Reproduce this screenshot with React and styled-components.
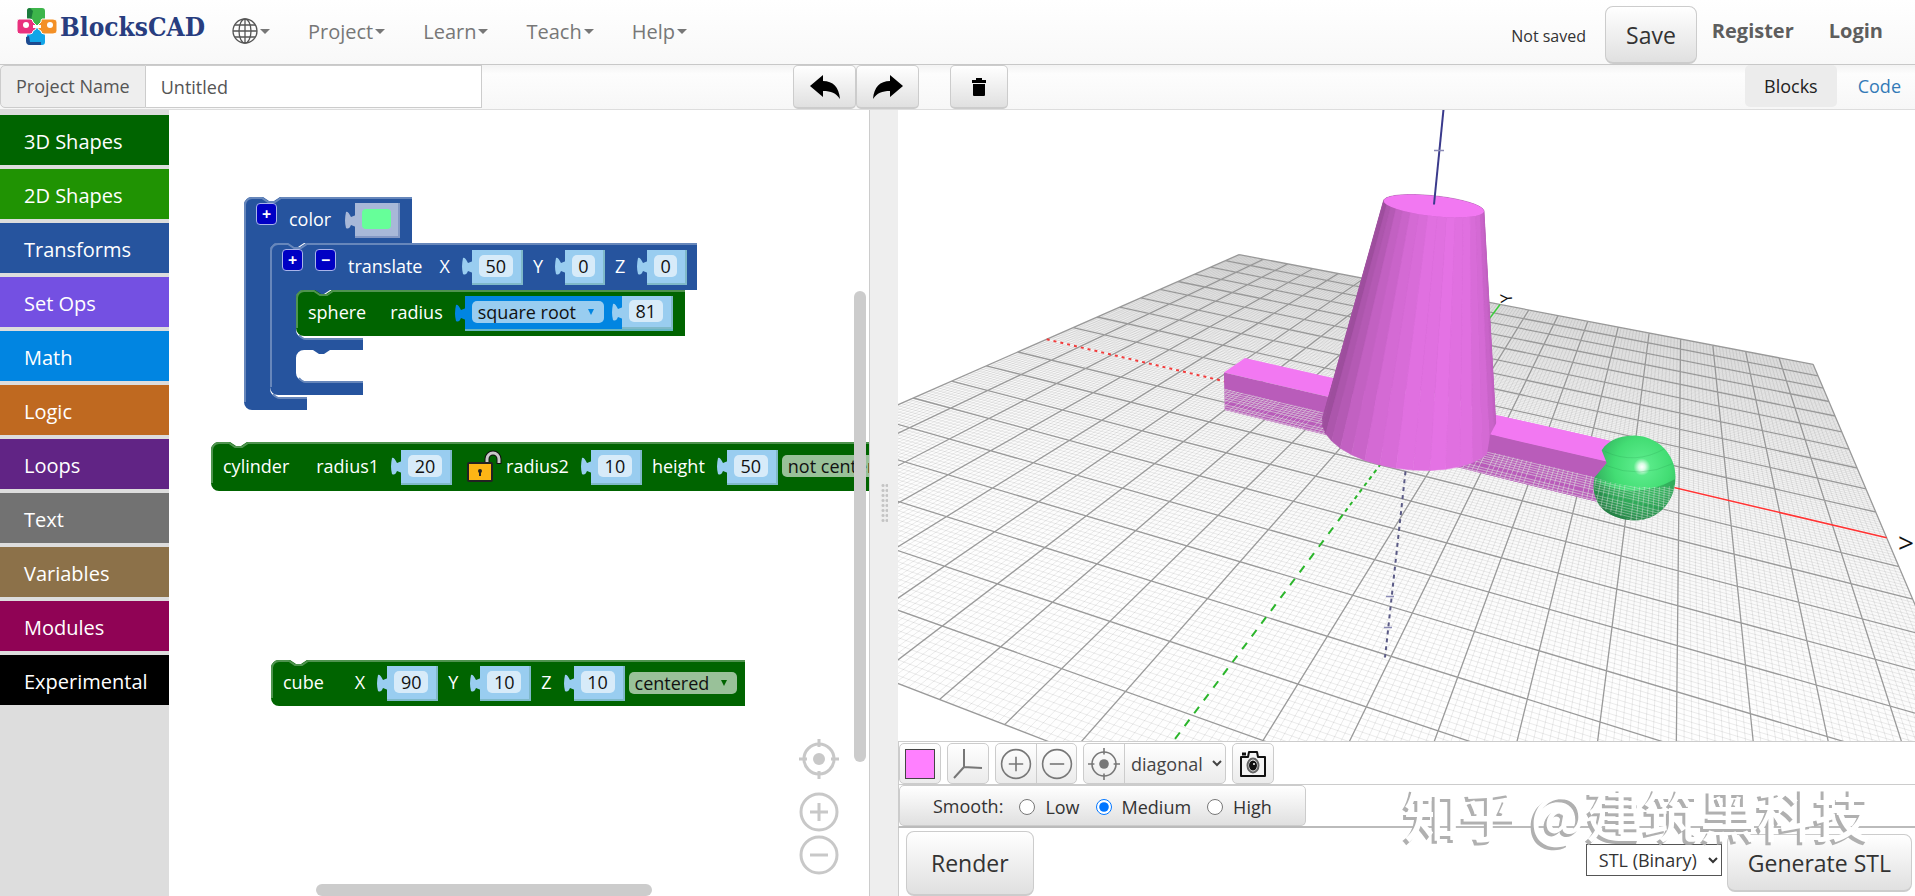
import React, { useState } from "react";
import styled, { createGlobalStyle, css } from "styled-components";

const GlobalStyle = createGlobalStyle`
    * {
        box-sizing: border-box;
    }
    html,
    body,
    #root {
        height: 100%;
        margin: 0;
    }
    body {
        font-family: "Open Sans", "Noto Sans", "Noto Sans CJK SC", sans-serif;
        font-size: 18px;
        color: #333;
        background: #fff;
        overflow: hidden;
    }
    button,
    input,
    select {
        font: inherit;
        color: inherit;
        margin: 0;
    }
`;

/* ---------- data ---------- */

const categories = [
    { name: "3D Shapes", color: "#006400" },
    { name: "2D Shapes", color: "#209303" },
    { name: "Transforms", color: "#26549e" },
    { name: "Set Ops", color: "#7450e2" },
    { name: "Math", color: "#0185e1" },
    { name: "Logic", color: "#bf6920" },
    { name: "Loops", color: "#612485" },
    { name: "Text", color: "#727272" },
    { name: "Variables", color: "#8c7149" },
    { name: "Modules", color: "#900355" },
    { name: "Experimental", color: "#000" },
];

const menus = ["Project", "Learn", "Teach", "Help"];
const levels = ["Low", "Medium", "High"];

/* ---------- header ---------- */

const Page = styled.div`
    height: 100vh;
    display: flex;
    flex-direction: column;
`;

const Header = styled.header`
    flex: none;
    height: 65px;
    display: flex;
    align-items: flex-start;
    padding: 0 32px 0 16px;
    border-bottom: 1px solid #c8c8c8;
    background: linear-gradient(#fff, #f8f8f8);
`;

const Brand = styled.a`
    display: flex;
    gap: 2px;
    width: 198px;
    padding-top: 7px;
    text-decoration: none;
    color: #283d7f;
    font-family: "DejaVu Serif Condensed", "DejaVu Serif", serif;
    font-size: 26px;
    font-weight: bold;
    line-height: 40px;
`;

const Menu = styled.nav`
    display: flex;
    flex: 1;
    gap: 38px;
    padding: 0 0 0 18px;
`;

const MenuButton = styled.button`
    display: flex;
    align-items: center;
    height: 62px;
    padding: 0;
    border: 0;
    background: none;
    font-size: 20px;
    color: #777;
`;

const Caret = styled.span`
    margin-left: 2px;
    border: 5px solid transparent;
    border-top-color: #777;
    border-bottom: 0;
`;

const Account = styled.div`
    display: flex;
    align-items: flex-start;
`;

const Status = styled.span`
    margin-right: 19px;
    font-size: 16px;
    line-height: 72px;
`;

const raised = css`
    border: 1px solid #ccc;
    border-radius: 5px;
    background: linear-gradient(#fff, #e0e0e0);
    color: #333;
`;

const BigButton = styled.button`
    ${raised}
    height: ${({ $height }) => $height}px;
    padding: 0 ${({ $pad }) => $pad}px;
    border-radius: 8px;
    border-bottom-width: 2px;
    font-size: 23px;
    white-space: nowrap;
`;

const SaveButton = styled(BigButton)`
    margin-top: 6px;
`;

const GenerateButton = styled(BigButton)`
    margin-top: 3px;
`;

const AccountLink = styled.a`
    margin-left: ${({ $gap }) => $gap}px;
    color: #5e5e5e;
    font-size: 20px;
    font-weight: bold;
    line-height: 62px;
    text-decoration: none;
`;

/* ---------- toolbar ---------- */

const Toolbar = styled.div`
    flex: none;
    height: 45px;
    display: flex;
    border-bottom: 1px solid #ddd;
    background: linear-gradient(#f3f3f3, #fdfdfd 20%, #f7f7f7);
`;

const ProjectGroup = styled.div`
    display: flex;
    flex: 0 0 482px;
    height: 43px;
`;

const ProjectLabel = styled.label`
    padding: 0 15px;
    border: 1px solid #ccc;
    border-radius: 5px 0 0 5px;
    background: #eee;
    color: #555;
    line-height: 41px;
`;

const ProjectInput = styled.input`
    flex: 1;
    min-width: 0;
    padding: 0 15px;
    border: 1px solid #ccc;
    border-left: 0;
    background: #fff;
    color: #555;
`;

const EditGroup = styled.div`
    display: flex;
    align-items: flex-start;
    margin-left: 311px;
`;

const EditButton = styled.button`
    ${raised}
    display: flex;
    align-items: center;
    justify-content: center;
    width: ${({ $width }) => $width}px;
    height: 44px;
    margin-left: ${({ $gap = 0 }) => $gap}px;
    padding: 0;
    border-bottom-width: 2px;
`;

const Tabs = styled.nav`
    display: flex;
    margin-left: auto;
`;

const Tab = styled.a`
    padding: 0 ${({ $active }) => ($active ? 19 : 14)}px 0 ${({ $active }) => ($active ? 19 : 21)}px;
    height: 42px;
    border-radius: 5px;
    background: ${({ $active }) => ($active ? "#ececec" : "none")};
    color: ${({ $active }) => ($active ? "#222" : "#337ab7")};
    line-height: 43px;
    text-decoration: none;
`;

/* ---------- editor ---------- */

const Main = styled.main`
    flex: 1;
    min-height: 0;
    display: grid;
    grid-template-columns: 169px minmax(0, 701fr) 28px minmax(0, 1017fr);
`;

const Toolbox = styled.ul`
    display: flex;
    flex-direction: column;
    gap: 4px;
    margin: 0;
    padding: 5px 0 0;
    list-style: none;
    background: #ddd;
`;

const Category = styled.li`
    height: 50px;
    padding-left: 24px;
    background: ${({ $color }) => $color};
    color: #fff;
    font-size: 20px;
    line-height: 54px;
`;

const Workspace = styled.section`
    position: relative;
    overflow: hidden;
    border-right: 1px solid #ccc;
    background: #fff;
`;

const BlockBox = styled.div`
    position: absolute;
    left: ${({ $x }) => $x}px;
    top: ${({ $y }) => $y}px;
`;

const BlockShape = styled.svg`
    display: block;
    position: absolute;
    overflow: visible;
`;

const BlockRow = styled.div`
    position: relative;
    display: flex;
    align-items: center;
    gap: 12px;
    height: ${({ $height = 47 }) => $height}px;
    padding-left: 12px;
    white-space: nowrap;
`;

const Title = styled.span`
    margin-right: ${({ $space = 0 }) => $space}px;
    color: #fff;
    line-height: 24px;
    padding-bottom: 3px;
`;

const Mutator = styled.button`
    align-self: flex-start;
    display: flex;
    align-items: center;
    justify-content: center;
    width: 21px;
    height: 22px;
    margin-top: 6px;
    padding: 0;
    border: 1px solid #a9b4ea;
    border-radius: 4px;
    background: #0000c4;
    color: #fff;
    font-size: 16px;
    font-weight: bold;
    line-height: 18px;
`;

const Plug = styled.svg`
    flex: none;
    display: block;
    margin-right: -1px;
`;

const ValueBlock = styled.div`
    display: flex;
    align-items: center;
    margin-right: ${({ $tight }) => ($tight ? -2 : 0)}px;
`;

const ValueBody = styled.div`
    display: flex;
    align-items: center;
    height: 35px;
    padding: 0 ${({ $right = 8 }) => $right}px 1px 7px;
    border-right: 2px solid ${({ $edge }) => $edge || "#7fb9c9"};
    border-bottom: 2px solid ${({ $edge }) => $edge || "#7fb9c9"};
    background: ${({ $color }) => $color};
`;

const NumberField = styled.input`
    width: ${({ $digits }) => ($digits > 1 ? 34 : 23)}px;
    height: 22px;
    padding: 0;
    border: 0;
    border-radius: 5px;
    background: #d7ebf9;
    color: #111;
    text-align: center;
    line-height: 22px;
`;

const Swatch = styled.button`
    width: 29px;
    height: 20px;
    border: 0;
    border-radius: 4px;
    background: #66ff99;
`;

const ChoiceBox = styled.div`
    position: relative;
    display: flex;
    margin-left: ${({ $pull = 0 }) => -$pull}px;
    margin-bottom: 2px;
`;

const Choice = styled.select`
    appearance: none;
    height: 22px;
    padding: 0 27px 0 6px;
    border: 0;
    border-radius: 5px;
    background: ${({ $color }) => $color};
    color: #111;
    line-height: 22px;
`;

const ChoiceArrow = styled.span`
    position: absolute;
    right: 10px;
    top: 8px;
    border: 3px solid transparent;
    border-top: 6px solid ${({ $color }) => $color};
    border-bottom: 0;
    pointer-events: none;
`;

const ScrollBar = styled.div`
    position: absolute;
    border-radius: 6px;
    background: #ccc;
    ${({ $vertical }) =>
        $vertical
            ? "right: 3px; top: 23%; width: 12px; height: 60%;"
            : "left: 21%; bottom: 0; width: 48%; height: 12px;"}
`;

const ZoomControls = styled.div`
    position: absolute;
    right: 30px;
    bottom: 21px;
    display: flex;
    flex-direction: column;
    gap: 3px;
`;

const IconButton = styled.button`
    display: flex;
    padding: 0;
    margin-bottom: ${({ $below = 0 }) => $below}px;
    border: 0;
    background: none;
`;

const Splitter = styled.div`
    display: flex;
    align-items: center;
    justify-content: center;
    background: #eee;
`;

const Grip = styled.div`
    width: 7px;
    height: 40px;
    background: radial-gradient(circle, #c4c4c4 1px, transparent 2px) 0 0 / 4px 5px;
`;

/* ---------- viewer ---------- */

const Viewer = styled.section`
    display: flex;
    flex-direction: column;
    min-height: 0;
    position: relative;
`;

const Scene = styled.svg`
    flex: 1;
    min-height: 0;
    width: 100%;
    display: block;
`;

const ViewBar = styled.div`
    flex: none;
    display: flex;
    gap: 6px;
    height: 44px;
    border: solid #ccc;
    border-width: 1px 0 1px 1px;
    padding-top: 1px;
`;

const ButtonSet = styled.div`
    ${raised}
    display: flex;
    background: linear-gradient(#fff, #ebebeb);
`;

const ViewButton = styled.button`
    display: flex;
    align-items: center;
    justify-content: center;
    width: 40px;
    padding: 0;
    border: 0;
    background: none;
    & + &,
    & + select {
        border-left: 1px solid #ccc;
    }
`;

const DefaultColor = styled.span`
    width: 30px;
    height: 30px;
    border: 1px solid #444;
    background: #ff80ff;
`;

const ViewSelect = styled.select`
    border: 0;
    padding: 0 6px 0 2px;
    background: none;
    color: #444;
`;

const SmoothBar = styled.div`
    flex: none;
    display: flex;
    height: 43px;
    border-left: 1px solid #ccc;
    border-bottom: 2px solid #bbb;
`;

const SmoothGroup = styled.fieldset`
    ${raised}
    display: flex;
    align-items: center;
    gap: 16px;
    margin: 0;
    padding: 0 33px;
`;

const RadioLabel = styled.label`
    display: flex;
    align-items: center;
    gap: 10px;
    padding-top: 2px;
`;

const Radio = styled.input`
    width: 16px;
    height: 16px;
    accent-color: #0075ff;
`;

const Actions = styled.div`
    flex: none;
    display: flex;
    align-items: flex-start;
    gap: 5px;
    height: 68px;
    padding: 3px 3px 0 7px;
    border-left: 1px solid #ccc;
`;

const FormatSelect = styled.select`
    height: 32px;
    margin: 13px 0 0 auto;
    padding: 0 7px 0 8px;
    border: 1px solid #555;
    background: #fff;
`;

const Watermark = styled.div`
    position: absolute;
    right: 44px;
    bottom: 44px;
    color: #fff;
    font-family: "Noto Sans CJK SC", sans-serif;
    font-size: 57px;
    font-weight: 500;
    line-height: 80px;
    text-shadow: -3px 3px 0 #b0b0b0;
    white-space: nowrap;
    pointer-events: none;
`;

/* ---------- icons ---------- */

const Logo = () => (
    <svg width="42" height="40" viewBox="0 0 42 40" aria-hidden="true">
        <path d="M11 4q0-3 3-3h12q3 0 3 3v7q0 3-4 3l-1 4h-8l-1-4q-4 0-4-3z" fill="#3db54a" />
        <path d="M11 4q0-3 3-3l3 3-2 9q-4 0-4-3z" fill="#1b7a3c" />
        <path d="M11 35q0 3 3 3h12q3 0 3-3v-6q0-4-4-4l-2-4h-6l-2 4q-4 0-4 4z" fill="#12a5e8" />
        <path d="M10 30l3-1 1 6h11v3H14q-4 0-4-4z" fill="#1d4a8f" />
        <path d="M3 12h11q3 0 3 3l3 3v4l-3 2q0 3-3 3H4q-3 0-3-3v-9q0-3 2-3z" fill="#e9317d" stroke="#fff" />
        <path d="M26 12h11q4 0 4 3v9q0 3-4 3H28q-3 0-3-3l-3-2v-4l3-3q0-3 1-3z" fill="#f39026" stroke="#fff" />
        <circle cx="10" cy="18" r="3" fill="#fff" />
        <circle cx="34" cy="18" r="3" fill="#fff" />
        <path d="M17 18h8v3h-8z" fill="#fff" />
    </svg>
);

const GlobeIcon = () => (
    <svg width="26" height="26" viewBox="0 0 26 26" fill="none" stroke="#555" strokeWidth="1.3" aria-hidden="true">
        <circle cx="13" cy="13" r="12" />
        <ellipse cx="13" cy="13" rx="6" ry="12" />
        <path d="M13 1v24M1 13h24M3 7h20M3 19h20" />
    </svg>
);

const ArrowIcon = ({ flip }) => (
    <svg width="32" height="26" viewBox="0 0 32 26" aria-hidden="true">
        <path
            d="M1 12L14 1v6c10 0 16 6 17 18-4-6-9-8-17-8v6z"
            fill="#000"
            transform={flip ? "matrix(-1 0 0 1 32 0)" : undefined}
        />
    </svg>
);

const TrashIcon = () => (
    <svg width="16" height="20" viewBox="0 0 16 20" aria-hidden="true">
        <path d="M5 1h6v2h4v3H1V3h4zM2 7h12v11q0 1-1 1H3q-1 0-1-1z" fill="#000" />
    </svg>
);

const CircleIcon = ({ kind, color, size = 40, weight = 3 }) => (
    <svg width={size} height={size} viewBox="0 0 40 40" fill="none" stroke={color} strokeWidth={weight} aria-hidden="true">
        {kind === "target" ? (
            <>
                <circle cx="20" cy="20" r="15" />
                <circle cx="20" cy="20" r="6" fill={color} stroke="none" />
                <path d="M20 0v8M20 32v8M0 20h8M32 20h8" />
            </>
        ) : (
            <>
                <circle cx="20" cy="20" r="18" />
                <path d={kind === "plus" ? "M20 11v18M11 20h18" : "M11 20h18"} />
            </>
        )}
    </svg>
);

const AxesIcon = () => (
    <svg width="32" height="32" viewBox="0 0 32 32" fill="none" stroke="#777" strokeWidth="2" aria-hidden="true">
        <path d="M12 1v18l18 1M12 19L2 30" />
    </svg>
);

const CameraIcon = () => (
    <svg width="28" height="28" viewBox="0 0 28 28" fill="none" stroke="#111" strokeWidth="2" aria-hidden="true">
        <path d="M2 7h7l1-5h8l1 5h7v19H2z" fill="#f4f4f4" strokeLinejoin="round" />
        <path d="M3 4h4" strokeWidth="3" />
        <ellipse cx="14" cy="15.5" rx="5.5" ry="7" stroke="#666" />
        <ellipse cx="14" cy="15.5" rx="3" ry="4" fill="#111" />
        <circle cx="15" cy="14" r="1" fill="#fff" stroke="none" />
    </svg>
);

const Lock = styled.svg`
    flex: none;
    margin: 0 -8px 0 4px;
`;

const LockIcon = () => (
    <Lock width="36" height="34" viewBox="0 0 36 34" aria-hidden="true">
        <path d="M21 15V9a6 6 0 0 1 12 0v5" fill="none" stroke="#111" strokeWidth="5" />
        <path d="M21 15V9a6 6 0 0 1 12 0v4" fill="none" stroke="#c9c9c9" strokeWidth="3" />
        <rect x="2" y="13" width="24" height="18" rx="1" fill="#fdb515" stroke="#222" strokeWidth="2" />
        <circle cx="14" cy="21" r="2" fill="#222" />
        <path d="M13 21h2v5h-2z" fill="#222" />
    </Lock>
);

/* ---------- blocks ---------- */

const TOP = "M0 8a8 8 0 0 1 8-8H19l6 4h5l6-4H";

// sockets: [top, bottom, width of the arm under it]
const blockPath = (width, row, sockets, inner, total) => {
    let d = `${TOP}${width}V${row}`;
    sockets.forEach(([, bottom, arm], i) => {
        d += `H${inner + 34}l-6 4h-5l-6-4H${inner + 8}a8 8 0 0 0-8 8V${bottom - 8}a8 8 0 0 0 8 8H${arm}`;
        d += `V${i + 1 < sockets.length ? sockets[i + 1][0] : total}`;
    });
    return `${d}H8a8 8 0 0 1-8-8Z`;
};

const Block = ({ x, y, width, row = 46, total = row, sockets = [], inner = 0, color, light, children }) => (
    <BlockBox $x={x} $y={y}>
        <BlockShape width={width} height={total} aria-hidden="true">
            <path d={blockPath(width, row, sockets, inner, total)} fill={color} />
            <path
                d={`M1 ${total - 8}V8a7 7 0 0 1 7-7H18l6 4h7l6-4H${width}`}
                fill="none"
                stroke={light}
                strokeWidth="2"
            />
            {sockets.map(([, bottom, arm]) => (
                <path
                    key={bottom}
                    d={`M${inner + 3} ${bottom - 3}q3 4 7 4H${arm}`}
                    fill="none"
                    stroke={light}
                    strokeWidth="2"
                />
            ))}
        </BlockShape>
        <BlockRow $height={row + 1}>{children}</BlockRow>
    </BlockBox>
);

const PlugTab = ({ color }) => (
    <Plug width="11" height="20" viewBox="0 0 11 20" aria-hidden="true">
        <path d="M11 4L6 6Q3 0 1 1Q-1 10 1 17Q4 19 6 14L11 16Z" fill={color} />
    </Plug>
);

const NumberBlock = ({ label, value }) => (
    <ValueBlock $tight>
        <PlugTab color="#99cdf0" />
        <ValueBody $color="#99cdf0">
            <NumberField aria-label={label} $digits={value.length} defaultValue={value} />
        </ValueBody>
    </ValueBlock>
);

const Dropdown = ({ label, value, color, arrow, pull }) => (
    <ChoiceBox $pull={pull}>
        <Choice aria-label={label} $color={color}>
            <option>{value}</option>
        </Choice>
        <ChoiceArrow $color={arrow} />
    </ChoiceBox>
);

const MathBlock = styled(ValueBody)`
    padding: 0 2px 0 7px;
    gap: 8px;
    border-right: 0;

    ${ValueBody} {
        height: 33px;
    }
`;

const green = { color: "#006400", light: "#4f934f" };
const blue = { color: "#26549e", light: "#6787bb" };

const Blocks = () => (
    <>
        <Block {...blue} x={75} y={87} width={168} row={46} total={213} inner={26} sockets={[[46, 200, 63]]}>
            <Mutator aria-label="Add color">+</Mutator>
            <Title $space={2}>color</Title>
            <ValueBlock>
                <PlugTab color="#a8b8d8" />
                <ValueBody $color="#a8b8d8" $edge="#8398c4" $right={7}>
                    <Swatch aria-label="Pick a color" />
                </ValueBody>
            </ValueBlock>
        </Block>
        <Block
            {...blue}
            x={101}
            y={133}
            width={427}
            row={47}
            total={152}
            inner={26}
            sockets={[
                [47, 95, 93],
                [107, 138, 93],
            ]}
        >
            <Mutator aria-label="Add axis">+</Mutator>
            <Mutator aria-label="Remove axis">−</Mutator>
            <Title $space={5}>translate</Title>
            <Title>X</Title>
            <NumberBlock label="X" value="50" />
            <Title>Y</Title>
            <NumberBlock label="Y" value="0" />
            <Title>Z</Title>
            <NumberBlock label="Z" value="0" />
        </Block>
        <Block {...green} x={127} y={180} width={389} row={46}>
            <Title $space={12}>sphere</Title>
            <Title>radius</Title>
            <ValueBlock>
                <PlugTab color="#0185e1" />
                <MathBlock $color="#0185e1" $edge="#66b5c4">
                    <Dropdown label="Function" value="square root" color="#99cdf0" arrow="#0185e1" />
                    <NumberBlock label="Radius" value="81" />
                </MathBlock>
            </ValueBlock>
        </Block>
        <Block {...green} x={42} y={332} width={760} row={49}>
            <Title $space={15}>cylinder</Title>
            <Title>radius1</Title>
            <NumberBlock label="Radius 1" value="20" />
            <LockIcon />
            <Title>radius2</Title>
            <NumberBlock label="Radius 2" value="10" />
            <Title>height</Title>
            <NumberBlock label="Height" value="50" />
            <Dropdown label="Cylinder centering" value="not centered" color="#99c199" arrow="#006400" pull={6} />
        </Block>
        <Block {...green} x={102} y={550} width={474} row={46}>
            <Title $space={19}>cube</Title>
            <Title>X</Title>
            <NumberBlock label="Cube X" value="90" />
            <Title>Y</Title>
            <NumberBlock label="Cube Y" value="10" />
            <Title>Z</Title>
            <NumberBlock label="Cube Z" value="10" />
            <Dropdown label="Cube centering" value="centered" color="#99c199" arrow="#006400" pull={6} />
        </Block>
    </>
);

/* ---------- 3D scene ---------- */

// Perspective projection of plate coordinates, one unit is 100 mm
const project = (x, y, z = 0) => {
    const w = 1 - 0.1354 * x + 0.4915 * y - 0.27 * z;
    return [
        (221.4 * x + 827.5 * y - 339 * z + 1409.8) / w,
        (39.8 * x + 29.3 * y - 495 * z + 425.6) / w,
    ];
};

const pt = (...p) => project(...p).map((v) => v.toFixed(1)).join(" ");
const line = (a, b) => `M${pt(...a)}L${pt(...b)}`;
const poly = (...points) => `M${points.map((p) => pt(...p)).join("L")}Z`;

// Grid lines every `step` mm, leaving out the multiples of `skip`
const gridPath = (step, skip) => {
    let d = "";
    for (let i = -100; i <= 100; i += step) {
        if (i % skip === 0) continue;
        d += line([i / 100, -1], [i / 100, 1]) + line([-1, i / 100], [1, i / 100]);
    }
    return d;
};

const minorGrid = gridPath(1, 10);
const majorGrid = gridPath(10, 1000);

const FACETS = 36;
const cone = Array.from({ length: FACETS }, (_, i) => {
    const at = (k, r, z) => {
        const t = (k / FACETS) * Math.PI * 2;
        return [r * Math.cos(t), r * Math.sin(t), z];
    };
    const mid = ((i + 0.5) / FACETS) * Math.PI * 2;
    const k = 0.7 + 0.3 * Math.max(0, 0.573 * Math.cos(mid) - 0.82 * Math.sin(mid)) - (i % 2) * 0.012;
    return {
        d: poly(at(i, 0.2, 0), at(i + 1, 0.2, 0), at(i + 1, 0.1, 0.5), at(i, 0.1, 0.5)),
        fill: `rgb(${Math.round(228 * k)},${Math.round(114 * k)},${Math.round(228 * k)})`,
        depth: Math.sin(mid - 0.27),
    };
}).sort((a, b) => b.depth - a.depth);

const coneTop = poly(
    ...Array.from({ length: FACETS }, (_, i) => {
        const t = (i / FACETS) * Math.PI * 2;
        return [0.1 * Math.cos(t), 0.1 * Math.sin(t), 0.5];
    })
);

const SPHERE =
    "M1601.7 450.7C1608 440 1622 436 1635 436C1658 437 1676 455 1675.5 478C1675 503 1658 521 1634 521C1614 520 1600 511 1596.5 500C1593 493 1593 485 1594.5 478L1606.7 463.5Z";

// Part of the bar, from one x to the other; what lies under the plate shows through the fine grid
const BarPart = ({ from, to }) => {
    const clip = `under${from > 0 ? "Right" : "Left"}`;
    return (
        <>
            <path d={poly([from, -0.05, 0.05], [to, -0.05, 0.05], [to, 0.05, 0.05], [from, 0.05, 0.05])} fill="#f278f2" />
            <path
                d={poly([from, -0.05, 0.05], [to, -0.05, 0.05], [to, -0.05, -0.05], [from, -0.05, -0.05])}
                fill="#b95cba"
            />
            <clipPath id={clip}>
                <path
                    d={poly([from, -0.05, 0.008], [to, -0.05, 0.008], [to, -0.05, -0.05], [from, -0.05, -0.05])}
                />
            </clipPath>
            <path d={minorGrid} clipPath={`url(#${clip})`} fill="none" stroke="#ddd" strokeOpacity="0.6" />
        </>
    );
};

const Viewport = () => (
    <Scene viewBox="898 110 1017 632" preserveAspectRatio="xMidYMid slice" role="img" aria-label="3D preview">
        <defs>
            <clipPath id="ballUnder">
                <path d="M1594 478Q1635 492 1676 486V522H1634L1596 506Z" />
            </clipPath>
            <radialGradient id="ball" cx="0.59" cy="0.37" r="0.68">
                <stop offset="0" stopColor="#fff" />
                <stop offset="0.06" stopColor="#d8fce4" />
                <stop offset="0.15" stopColor="#58ea88" />
                <stop offset="0.5" stopColor="#43dd74" />
                <stop offset="0.75" stopColor="#38bf65" />
                <stop offset="1" stopColor="#2a8a4b" />
            </radialGradient>
            <linearGradient id="plate" gradientUnits="userSpaceOnUse" x1="1500" y1="260" x2="1400" y2="640">
                <stop offset="0" stopColor="#ebebeb" />
                <stop offset="0.5" stopColor="#f8f8f8" />
                <stop offset="1" stopColor="#fefefe" />
            </linearGradient>
        </defs>
        <path d={poly([-1, -1], [1, -1], [1, 1], [-1, 1])} fill="url(#plate)" />
        <path d={minorGrid} stroke="#000" strokeOpacity="0.09" strokeWidth="0.9" />
        <path d={majorGrid} stroke="#8f8f8f" strokeOpacity="0.9" strokeWidth="1.3" />

        <path d={line([-1, 0], [-0.45, 0])} stroke="#f03c3c" strokeWidth="2" strokeDasharray="3 4" />
        <path d={line([0, 0], [1, 0])} stroke="#f33" strokeWidth="1.5" />
        <path d={line([0, 0], [0, 1])} stroke="#3ccc3c" strokeWidth="1.5" />
        <path d={line([0, 0], [0, -0.4])} stroke="#2bb52b" strokeWidth="2" strokeDasharray="4 4" />
        <path d={line([0, -0.4], [0, -1])} stroke="#2bb52b" strokeWidth="2" strokeDasharray="8 8" />
        <path d="M1409 440L1385 658" stroke="#5a5a85" strokeWidth="2" strokeDasharray="4 4" />
        <path d="M1386 597h8M1384 628h8" stroke="#8a8ab5" strokeWidth="1.5" />

        <BarPart from={-0.45} to={0.45} />
        {cone.map(({ d, fill }) => (
            <path key={d} d={d} fill={fill} stroke={fill} strokeWidth="0.6" />
        ))}
        <path d={coneTop} fill="#f278f2" />
        <BarPart from={0.194} to={0.45} />
        <path d={SPHERE} fill="url(#ball)" />
        <path
            d="M1605 452Q1635 466 1665 449M1606 466Q1640 480 1673 464M1595 482Q1635 502 1675 480M1596 497Q1634 518 1670 497"
            fill="none"
            stroke="#1f8a45"
            strokeOpacity="0.2"
        />
        <path
            d="M1595 482Q1635 502 1675 480C1675 503 1658 521 1634 521C1614 520 1600 511 1596 500Z"
            fill="#1d6b38"
            fillOpacity="0.35"
        />
        <path d={minorGrid} clipPath="url(#ballUnder)" stroke="#e8e8e8" strokeOpacity="0.4" />

        <path d="M1434 205L1443.5 110" stroke="#3a3a8c" strokeWidth="2" />
        <path d="M1434 151h10" stroke="#8a8ab5" strokeWidth="1.5" />
        <text
            x="1506"
            y="299"
            fontSize="16"
            fill="#111"
            textAnchor="middle"
            dominantBaseline="central"
            transform="rotate(-94 1506 299)"
        >
            Y
        </text>
        <text x="1898" y="553" fontSize="28" fill="#111">
            &gt;
        </text>
    </Scene>
);

/* ---------- app ---------- */

const App = () => {
    const [smooth, setSmooth] = useState("Medium");

    return (
        <Page>
            <GlobalStyle />
            <Header>
                <Brand href="#">
                    <Logo />
                    BlocksCAD
                </Brand>
                <Menu>
                    <MenuButton aria-label="Language">
                        <GlobeIcon />
                        <Caret />
                    </MenuButton>
                    {menus.map((name) => (
                        <MenuButton key={name}>
                            {name}
                            <Caret />
                        </MenuButton>
                    ))}
                </Menu>
                <Account>
                    <Status>Not saved</Status>
                    <SaveButton $height={58} $pad={20}>
                        Save
                    </SaveButton>
                    <AccountLink href="#" $gap={15}>
                        Register
                    </AccountLink>
                    <AccountLink href="#" $gap={35}>
                        Login
                    </AccountLink>
                </Account>
            </Header>

            <Toolbar>
                <ProjectGroup>
                    <ProjectLabel htmlFor="project-name">Project Name</ProjectLabel>
                    <ProjectInput id="project-name" defaultValue="Untitled" />
                </ProjectGroup>
                <EditGroup>
                    <EditButton $width={63} aria-label="Undo">
                        <ArrowIcon />
                    </EditButton>
                    <EditButton $width={63} aria-label="Redo">
                        <ArrowIcon flip />
                    </EditButton>
                    <EditButton $width={58} $gap={31} aria-label="Delete">
                        <TrashIcon />
                    </EditButton>
                </EditGroup>
                <Tabs>
                    <Tab href="#" $active>
                        Blocks
                    </Tab>
                    <Tab href="#">Code</Tab>
                </Tabs>
            </Toolbar>

            <Main>
                <Toolbox>
                    {categories.map(({ name, color }) => (
                        <Category key={name} $color={color}>
                            {name}
                        </Category>
                    ))}
                </Toolbox>
                <Workspace>
                    <Blocks />
                    <ScrollBar $vertical />
                    <ScrollBar />
                    <ZoomControls>
                        <IconButton $below={10} aria-label="Center blocks">
                            <CircleIcon kind="target" color="#c8c8c8" />
                        </IconButton>
                        <IconButton aria-label="Zoom in blocks">
                            <CircleIcon kind="plus" color="#c8c8c8" />
                        </IconButton>
                        <IconButton aria-label="Zoom out blocks">
                            <CircleIcon kind="minus" color="#c8c8c8" />
                        </IconButton>
                    </ZoomControls>
                </Workspace>
                <Splitter>
                    <Grip />
                </Splitter>
                <Viewer>
                    <Viewport />
                    <ViewBar>
                        <ButtonSet>
                            <ViewButton aria-label="Default color">
                                <DefaultColor />
                            </ViewButton>
                        </ButtonSet>
                        <ButtonSet>
                            <ViewButton aria-label="Toggle axes">
                                <AxesIcon />
                            </ViewButton>
                        </ButtonSet>
                        <ButtonSet>
                            <ViewButton aria-label="Zoom in">
                                <CircleIcon kind="plus" color="#777" size={32} weight={2} />
                            </ViewButton>
                            <ViewButton aria-label="Zoom out">
                                <CircleIcon kind="minus" color="#777" size={32} weight={2} />
                            </ViewButton>
                        </ButtonSet>
                        <ButtonSet>
                            <ViewButton aria-label="Reset view">
                                <CircleIcon kind="target" color="#777" size={32} weight={2} />
                            </ViewButton>
                            <ViewSelect aria-label="View">
                                <option>diagonal</option>
                            </ViewSelect>
                        </ButtonSet>
                        <ButtonSet>
                            <ViewButton aria-label="Take picture">
                                <CameraIcon />
                            </ViewButton>
                        </ButtonSet>
                    </ViewBar>
                    <SmoothBar>
                        <SmoothGroup>
                            <span>Smooth:</span>
                            {levels.map((level) => (
                                <RadioLabel key={level}>
                                    <Radio
                                        type="radio"
                                        name="smooth"
                                        checked={smooth === level}
                                        onChange={() => setSmooth(level)}
                                    />
                                    {level}
                                </RadioLabel>
                            ))}
                        </SmoothGroup>
                    </SmoothBar>
                    <Actions>
                        <BigButton $height={65} $pad={24}>
                            Render
                        </BigButton>
                        <FormatSelect aria-label="Export format">
                            <option>STL (Binary)</option>
                        </FormatSelect>
                        <GenerateButton $height={58} $pad={20}>
                            Generate STL
                        </GenerateButton>
                    </Actions>
                    <Watermark>知乎 @建筑黑科技</Watermark>
                </Viewer>
            </Main>
        </Page>
    );
};

export default App;
